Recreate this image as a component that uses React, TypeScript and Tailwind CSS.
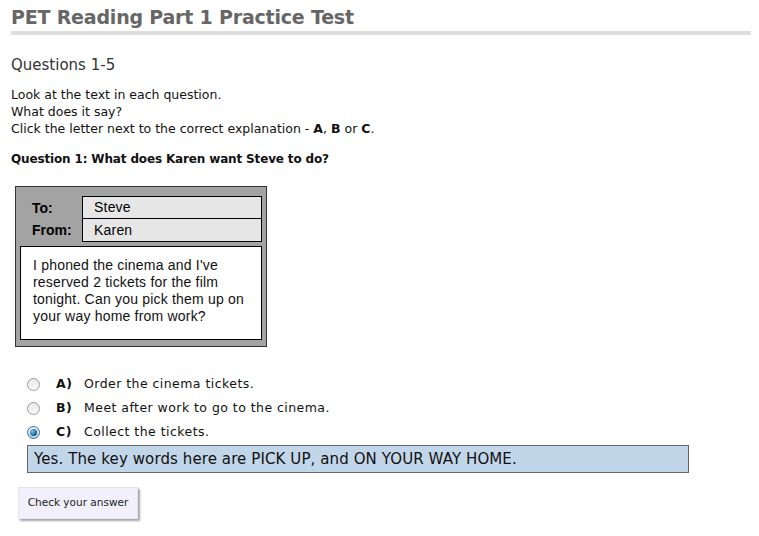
import { useState } from 'react';

const options = [
  { letter: 'A)', text: 'Order the cinema tickets.' },
  { letter: 'B)', text: 'Meet after work to go to the cinema.' },
  { letter: 'C)', text: 'Collect the tickets.' },
];

export default function App() {
  const [picked, setPicked] = useState(2);

  return (
    <div className="w-[759px] h-[536px] bg-white px-[11px] pt-[4px] font-['DejaVu_Sans',Verdana,sans-serif] text-[#111]">
      {/* Title */}
      <h1 className="text-[19px] leading-[26px] font-bold text-[#666] tracking-[-0.2px]">
        PET Reading Part 1 Practice Test
      </h1>
      <div className="mt-[1px] h-[4px] w-[740px] bg-[#dedede]" />

      <h2 className="mt-[20px] text-[15px] leading-[20px] text-[#333]">Questions 1-5</h2>

      <div className="mt-[11px] text-[12.5px] leading-[17px]">
        <p>Look at the text in each question.</p>
        <p>What does it say?</p>
        <p>
          Click the letter next to the correct explanation - <b>A</b>, <b>B</b> or <b>C</b>.
        </p>
      </div>

      <p className="mt-[14px] text-[12px] leading-[17px] font-bold tracking-[-0.15px]">
        Question 1: What does Karen want Steve to do?
      </p>

      {/* Note card */}
      <div className="mt-[18px] ml-[4px] w-[252px] border border-[#333] bg-[#a3a3a3] px-[4px] pt-[9px] pb-[6px] font-['Liberation_Sans',Arial,sans-serif]">
        <div className="flex">
          <div className="w-[62px] pl-[12px] text-[14px] font-bold leading-[22px] text-black">
            <div className="pt-[1px]">To:</div>
            <div>From:</div>
          </div>
          <div className="flex-1 border border-black bg-[#e6e6e6] text-[14px] leading-[21px] text-black tracking-[0.2px]">
            <div className="border-b border-black pl-[11px]">Steve</div>
            <div className="pl-[11px] pt-[1px]">Karen</div>
          </div>
        </div>
        <div className="mt-[4px] border border-black bg-white px-[12px] pt-[10px] pb-[14px] text-[14px] leading-[17px] text-[#111] tracking-[0.2px]">
          I phoned the cinema and I've reserved 2 tickets for the film tonight. Can you pick them up on your way home from work?
        </div>
      </div>

      {/* Options */}
      <div className="mt-[28px] flex flex-col gap-[6px] pl-[16px] text-[12.5px] leading-[18px]">
        {options.map((o, i) => (
          <label key={o.letter} className="flex items-center cursor-pointer" onClick={() => setPicked(i)}>
            <span
              className={`flex h-[13px] w-[13px] items-center justify-center rounded-full border ${
                picked === i
                  ? 'border-[#3d6c8f] bg-gradient-to-b from-[#e9f3fb] to-[#b8d4ea]'
                  : 'border-[#9a9a9a] bg-gradient-to-b from-[#e6e6e6] to-[#fbfbfb]'
              }`}
            >
              {picked === i && (
                <span className="h-[7px] w-[7px] rounded-full bg-[radial-gradient(circle_at_35%_35%,#7cc4f2,#14598e_70%,#0c3a63)]" />
              )}
            </span>
            <b className="ml-[16px] w-[28px] tracking-[0.5px]">{o.letter}</b>
            <span className="tracking-[0.45px]">{o.text}</span>
          </label>
        ))}
      </div>

      {/* Feedback */}
      <div className="mt-[4px] ml-[16px] w-[662px] border border-[#666] bg-[#c2d6ea] pl-[6px] text-[15px] leading-[26px] tracking-[0.1px] text-[#111]">
        Yes. The key words here are PICK UP, and ON YOUR WAY HOME.
      </div>

      <button className="mt-[14px] ml-[7px] h-[32px] w-[120px] bg-[#f1f0fc] text-[10.5px] text-[#222] shadow-[2px_2px_2px_rgba(0,0,0,0.35)] border border-[#e4e4ee]">
        Check your answer
      </button>
    </div>
  );
}
